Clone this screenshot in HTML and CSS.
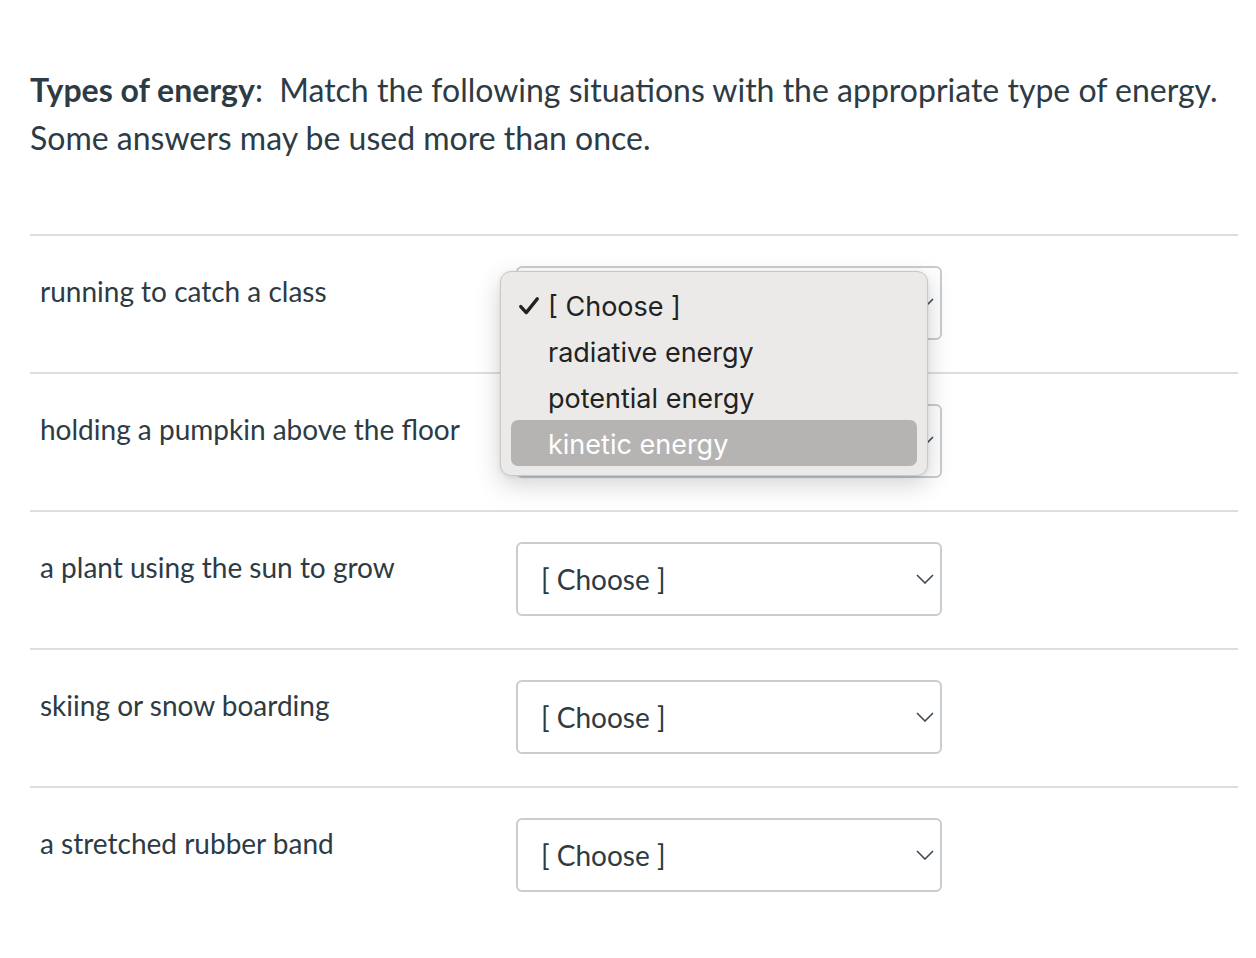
FILE: index.html
```html
<!DOCTYPE html>
<html lang="en">
<head>
  <meta charset="UTF-8" />
  <title>Types of energy</title>
  <link rel="stylesheet" href="styles.css">
</head>
<body>
  <div class="question">
    <p class="prompt"><strong>Types of energy</strong>:&nbsp; Match the following situations with the appropriate type of energy. Some answers may be used more than once.</p>

    <div class="answers">
      <div class="answer">
        <div class="label">running to catch a class</div>
        <div class="select-wrap">
          <div class="select"><span>[ Choose ]</span>
            <svg class="chev" viewBox="0 0 18 10"><path d="M1 1 L9 9 L17 1"/></svg>
          </div>
          <ul class="menu">
            <li class="checked">
              <svg class="tick" viewBox="0 0 20 20"><path d="M2.5 10.5 L7.5 16 L17.5 3.5"/></svg>
              [ Choose ]
            </li>
            <li>radiative energy</li>
            <li>potential energy</li>
            <li class="hover">kinetic energy</li>
          </ul>
        </div>
      </div>

      <div class="answer">
        <div class="label">holding a pumpkin above the floor</div>
        <div class="select-wrap">
          <div class="select"><span>[ Choose ]</span>
            <svg class="chev" viewBox="0 0 18 10"><path d="M1 1 L9 9 L17 1"/></svg>
          </div>
        </div>
      </div>

      <div class="answer">
        <div class="label">a plant using the sun to grow</div>
        <div class="select-wrap">
          <div class="select"><span>[ Choose ]</span>
            <svg class="chev" viewBox="0 0 18 10"><path d="M1 1 L9 9 L17 1"/></svg>
          </div>
        </div>
      </div>

      <div class="answer">
        <div class="label">skiing or snow boarding</div>
        <div class="select-wrap">
          <div class="select"><span>[ Choose ]</span>
            <svg class="chev" viewBox="0 0 18 10"><path d="M1 1 L9 9 L17 1"/></svg>
          </div>
        </div>
      </div>

      <div class="answer">
        <div class="label">a stretched rubber band</div>
        <div class="select-wrap">
          <div class="select"><span>[ Choose ]</span>
            <svg class="chev" viewBox="0 0 18 10"><path d="M1 1 L9 9 L17 1"/></svg>
          </div>
        </div>
      </div>
    </div>
  </div>
</body>
</html>
```

FILE: styles.css
```css
:root {
  --text: #2d3b45;
  --rule: #dedede;
  --field: #c7cdd1;
}

* {
  margin: 0;
  padding: 0;
  box-sizing: border-box;
}

body {
  background: #fff;
  color: var(--text);
  font-family: Lato, "Liberation Sans", sans-serif;
}

.question {
  padding: 66px 18px 0 30px;
}

.prompt {
  font-size: 32px;
  line-height: 48px;
}

.prompt strong {
  font-weight: 700;
}

.answers {
  margin-top: 72px;
}

.answer {
  display: flex;
  border-top: 2px solid var(--rule);
  padding: 30px 0 32px;
}

.label {
  width: 486px;
  padding: 0 10px;
  font-size: 28px;
  line-height: 50px;
}

.select-wrap {
  position: relative;
}

.select {
  width: 426px;
  height: 74px;
  border: 2px solid var(--field);
  border-radius: 6px;
  display: flex;
  align-items: center;
  justify-content: space-between;
  padding: 0 6px 0 23px;
  font-size: 28px;
  background: #fff;
}

.chev {
  width: 18px;
  height: 10px;
  fill: none;
  stroke: #3d4a55;
  stroke-width: 1.6;
}

.menu {
  position: absolute;
  left: -16px;
  top: 5px;
  width: 428px;
  list-style: none;
  background: #ebeae8;
  border: 1px solid #c9c8c6;
  border-radius: 11px;
  padding: 10px 10px 9px;
  box-shadow: 0 8px 26px rgba(0, 0, 0, 0.18), 0 1px 4px rgba(0, 0, 0, 0.08);
  font-family: Inter, "Open Sans", sans-serif;
  font-size: 27px;
  color: #222;
  z-index: 10;
}

.menu li {
  position: relative;
  height: 46px;
  line-height: 50px;
  padding-left: 37px;
  border-radius: 7px;
}

.menu li.hover {
  background: #b5b4b2;
  color: #fff;
}

.tick {
  position: absolute;
  left: 7px;
  top: 13px;
  width: 22px;
  height: 22px;
  fill: none;
  stroke: #222;
  stroke-width: 3;
  stroke-linecap: round;
  stroke-linejoin: round;
}
```
